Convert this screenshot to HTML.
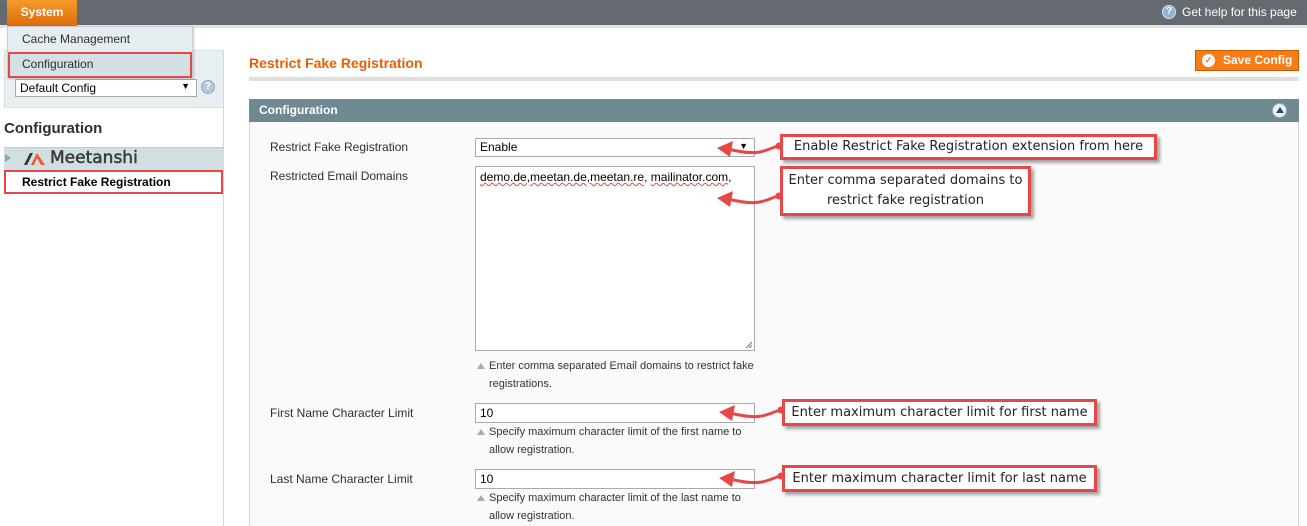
<!DOCTYPE html>
<html><head><meta charset="utf-8"><style>
*{margin:0;padding:0;box-sizing:border-box}
html,body{width:1307px;height:526px;overflow:hidden}
body{background:#fff;font-family:"Liberation Sans",Arial,sans-serif;font-size:12px;color:#2f2f2f;position:relative}
.a{position:absolute}
.lbl{position:absolute;left:270px;font-size:12px;color:#2f2f2f}
.inp{position:absolute;left:475px;width:280px;background:#fff;border:1px solid #aaa;font-size:12px;color:#000;padding:2px 4px}
.note{position:absolute;left:477px;font-size:11px;color:#333;line-height:18px;width:280px}
.note:before{content:"";position:absolute;left:0;top:6px;border-left:4px solid transparent;border-right:4px solid transparent;border-bottom:6px solid #aaa}
.note span{display:block;padding-left:12px}
.call{position:absolute;background:#fff;border:3px solid #e8474a;box-shadow:3px 3px 3px rgba(0,0,0,.35);font-family:"DejaVu Sans",sans-serif;font-size:13px;color:#222;text-align:center;line-height:21px}
</style></head><body>
<div class="a" style="left:0;top:0;width:1307px;height:25px;background:#646a70"></div>
<div class="a" style="left:0;top:25px;width:1307px;height:3px;background:#e4e4e4"></div>
<div class="a" style="left:7px;top:0;width:70px;height:26px;background:linear-gradient(#f49b2a,#dd6b09);color:#fff;font-weight:bold;font-size:12px;text-align:center;line-height:24px">System</div>
<div class="a" style="left:1162px;top:5px;width:14px;height:14px;border-radius:50%;background:#8fb4d6;border:1px solid #dde;color:#fff;font-size:10px;font-weight:bold;text-align:center;line-height:12px">?</div>
<div class="a" style="left:1182px;top:5px;color:#fff;font-size:12px">Get help for this page</div>

<div class="a" style="left:4px;top:50px;width:220px;height:58px;background:#e7eff1;border:1px solid #d6e0e3"></div>
<div class="a" style="left:223px;top:50px;width:1px;height:476px;background:#d6d6d6"></div>
<div class="a" style="left:15px;top:79px;width:182px;height:18px;background:#fff;border:1px solid #aaa;font-size:12px;color:#000;padding:1px 4px">Default Config<span style="position:absolute;right:6px;top:1px;font-size:9px">▼</span></div>
<div class="a" style="left:201px;top:80px;width:14px;height:14px;border-radius:50%;background:#b6c8dd;border:1px solid #9ab;color:#fff;font-size:10px;font-weight:bold;text-align:center;line-height:12px">?</div>
<div class="a" style="left:7px;top:26px;width:186px;height:52px;background:#e5edf0;border:1px solid #c8cfd2;box-shadow:1px 1px 2px rgba(0,0,0,.2)"></div>
<div class="a" style="left:22px;top:32px;font-size:12px;color:#2f2f2f">Cache Management</div>
<div class="a" style="left:8px;top:52px;width:184px;height:26px;background:#d3e0e5;border:2px solid #e8474a"></div>
<div class="a" style="left:22px;top:57px;font-size:12px;color:#2f2f2f">Configuration</div>
<div class="a" style="left:4px;top:120px;font-size:15px;font-weight:bold;color:#2f2f2f">Configuration</div>
<div class="a" style="left:4px;top:147px;width:220px;height:23px;background:#d1dee2;border-top:1px solid #bcc"></div>
<div class="a" style="left:5px;top:154px;border-top:4px solid transparent;border-bottom:4px solid transparent;border-left:6px solid #8aa"></div>
<svg class="a" style="left:23px;top:152px" width="24" height="14" viewBox="0 0 24 14"><path d="M1 13 L7 1 L10 1 L4 13Z" fill="#333"/><path d="M8 13 L14 1 L22 13 L18 13 L14 6 L11 13Z" fill="#f05a28"/></svg>
<div class="a" style="left:50px;top:148px;font-family:'DejaVu Sans',sans-serif;font-size:17px;color:#3a3a3a;-webkit-text-stroke:0.5px #3a3a3a">Meetanshi</div>
<div class="a" style="left:4px;top:170px;width:219px;height:24px;border:2px solid #e8474a;background:#fff"></div>
<div class="a" style="left:22px;top:175px;font-size:12px;font-weight:bold;color:#000">Restrict Fake Registration</div>

<div class="a" style="left:249px;top:55px;font-size:14px;font-weight:bold;color:#eb5e00">Restrict Fake Registration</div>
<div class="a" style="left:249px;top:77px;width:1050px;height:4px;background:#dfdfdf"></div>
<div class="a" style="left:1195px;top:50px;width:104px;height:21px;background:#f77c16;border:1px solid #c55d00;color:#fff;font-weight:bold;font-size:12px;line-height:19px;padding-left:27px">Save Config</div>
<div class="a" style="left:1202px;top:54px;width:13px;height:13px;border-radius:50%;background:#fff;color:#f77c16;font-size:9px;text-align:center;line-height:13px;font-weight:bold">✓</div>

<div class="a" style="left:249px;top:99px;width:1050px;height:23px;background:#6f8992;color:#fff;font-weight:bold;font-size:12px;line-height:22px;padding-left:10px">Configuration</div>
<div class="a" style="left:1272px;top:103px;width:15px;height:15px;border-radius:50%;background:#eef2f3;border:1px solid #9ab"></div>
<div class="a" style="left:1276px;top:107px;border-left:4px solid transparent;border-right:4px solid transparent;border-bottom:6px solid #2e4a55"></div>
<div class="a" style="left:249px;top:122px;width:1050px;height:404px;background:#fafafa;border-left:1px solid #d6d6d6;border-right:1px solid #d6d6d6"></div>

<div class="lbl" style="top:140px">Restrict Fake Registration</div>
<div class="lbl" style="top:169px">Restricted Email Domains</div>
<div class="lbl" style="top:406px">First Name Character Limit</div>
<div class="lbl" style="top:472px">Last Name Character Limit</div>

<div class="inp" style="top:138px;height:19px;padding-top:1px">Enable<span style="position:absolute;right:6px;top:2px;font-size:9px">▼</span></div>
<div class="inp" style="top:166px;height:185px;padding-top:3px"><span style="text-decoration:underline wavy #e44;text-decoration-thickness:1px">demo.de,meetan.de,meetan.re</span>, <span style="text-decoration:underline wavy #e44;text-decoration-thickness:1px">mailinator.com</span>,
<svg style="position:absolute;right:1px;bottom:1px" width="8" height="8"><path d="M7 1L1 7M7 4L4 7" stroke="#777"/></svg></div>
<div class="note" style="top:357px"><span>Enter comma separated Email domains to restrict fake registrations.</span></div>
<div class="inp" style="top:403px;height:20px">10</div>
<div class="note" style="top:423px"><span>Specify maximum character limit of the first name to allow registration.</span></div>
<div class="inp" style="top:469px;height:20px">10</div>
<div class="note" style="top:489px"><span>Specify maximum character limit of the last name to allow registration.</span></div>

<div class="call" style="left:780px;top:134px;width:377px;height:26px;line-height:20px">Enable Restrict Fake Registration extension from here</div>
<div class="call" style="left:780px;top:166px;width:251px;height:50px;padding-top:2px;line-height:20px">Enter comma separated domains to<br>restrict fake registration</div>
<div class="call" style="left:782px;top:399px;width:315px;height:27px">Enter maximum character limit for first name</div>
<div class="call" style="left:782px;top:465px;width:315px;height:27px">Enter maximum character limit for last name</div>

<svg class="a" style="left:0;top:0" width="1307" height="526">
<g fill="none" stroke="#e8474a" stroke-width="3" stroke-linecap="round">
<path d="M778 146 C765 150 760 157 728 149"/>
<path d="M778 196 C765 200 760 207 728 199"/>
<path d="M780 410 C767 414 762 421 730 413"/>
<path d="M780 476 C767 480 762 487 730 479"/>
</g>
<g fill="#e8474a">
<circle cx="779" cy="146" r="3.5"/><path d="M717 148 L733 141 L730 157Z"/>
<circle cx="779" cy="196" r="3.5"/><path d="M717 198 L733 191 L730 207Z"/>
<circle cx="781" cy="410" r="3.5"/><path d="M719 412 L735 405 L732 421Z"/>
<circle cx="781" cy="476" r="3.5"/><path d="M719 478 L735 471 L732 487Z"/>
</g>
</svg>
</body></html>
